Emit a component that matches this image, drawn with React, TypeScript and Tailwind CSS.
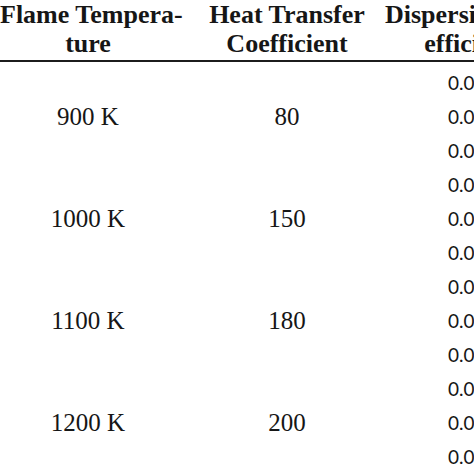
const groups = [
  { temp: '900 K', coeff: '80', values: ['0.005', '0.007', '0.009'] },
  { temp: '1000 K', coeff: '150', values: ['0.005', '0.007', '0.009'] },
  { temp: '1100 K', coeff: '180', values: ['0.005', '0.007', '0.009'] },
  { temp: '1200 K', coeff: '200', values: ['0.005', '0.007', '0.009'] }
];

export default function App() {
  return (
    <div className="h-[474px] w-[474px] overflow-hidden bg-white text-[#161616]">
      <div className="flex w-[540px] flex-col font-['Liberation_Serif',serif]">
        {/* header */}
        <div className="flex border-b-2 border-[#1c1c1c] pb-[2px] text-[26px] font-bold leading-[29px]">
          <div className="w-[176px] whitespace-nowrap text-center">
            <div>Flame Tempera-</div>
            <div>ture</div>
          </div>
          <div className="w-[222px] whitespace-nowrap text-center">
            <div>Heat Transfer</div>
            <div>Coefficient</div>
          </div>
          <div className="w-[142px] whitespace-nowrap text-center">
            <div className="-ml-[13px]">Dispersion Co-</div>
            <div>efficient</div>
          </div>
        </div>

        {/* body */}
        <div className="flex flex-col pt-[4px]">
          {groups.map((g) => (
            <div key={g.temp} className="flex h-[102px]">
              <div className="flex w-[176px] items-center justify-center text-[25px]">{g.temp}</div>
              <div className="flex w-[222px] items-center justify-center text-[25px]">{g.coeff}</div>
              <div className="flex w-[142px] flex-col pl-[50px] font-['Lato',sans-serif] text-[19px]">
                {g.values.map((v, i) => (
                  <div key={i} className="flex h-[34px] items-center">
                    {v}
                  </div>
                ))}
              </div>
            </div>
          ))}
        </div>
      </div>
    </div>
  );
}
